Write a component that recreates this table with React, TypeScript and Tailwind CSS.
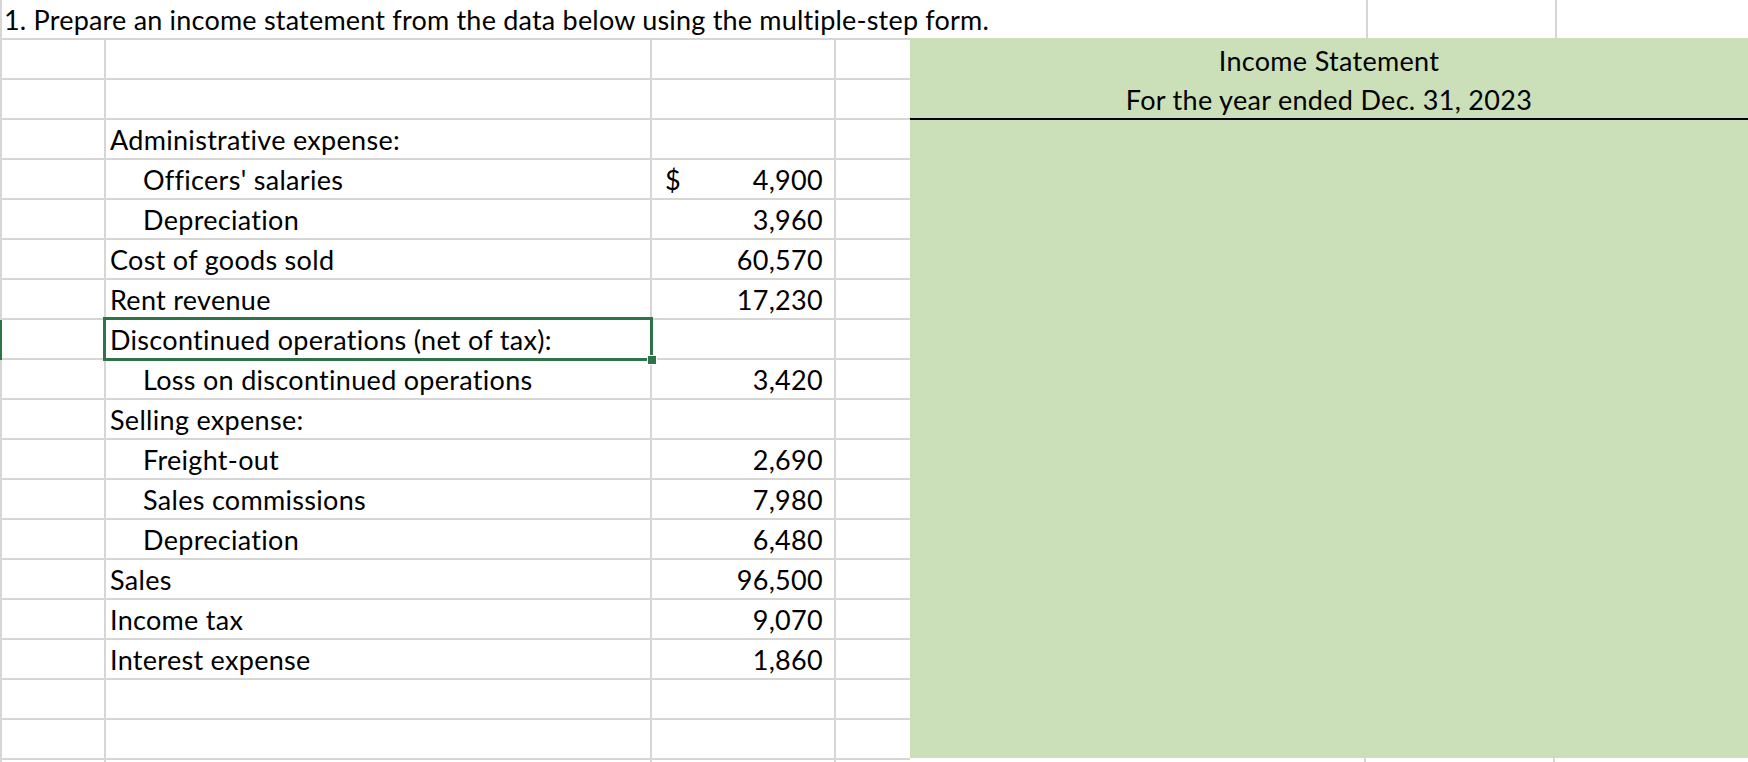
import React from "react";

type Row = { label?: string; indent?: boolean; dollar?: boolean; value?: string; selected?: boolean };

const rows: Row[] = [
  {},
  {},
  { label: "Administrative expense:" },
  { label: "Officers' salaries", indent: true, dollar: true, value: "4,900" },
  { label: "Depreciation", indent: true, value: "3,960" },
  { label: "Cost of goods sold", value: "60,570" },
  { label: "Rent revenue", value: "17,230" },
  { label: "Discontinued operations (net of tax):", selected: true },
  { label: "Loss on discontinued operations", indent: true, value: "3,420" },
  { label: "Selling expense:" },
  { label: "Freight-out", indent: true, value: "2,690" },
  { label: "Sales commissions", indent: true, value: "7,980" },
  { label: "Depreciation", indent: true, value: "6,480" },
  { label: "Sales", value: "96,500" },
  { label: "Income tax", value: "9,070" },
  { label: "Interest expense", value: "1,860" },
  {},
  {},
];

export default function App() {
  return (
    <div
      className="w-[1748px] h-[762px] overflow-hidden bg-white text-black text-[27px] leading-none tracking-[0.3px]"
      style={{ fontFamily: "Lato, 'Open Sans', sans-serif" }}
    >
      {/* Header row */}
      <div className="flex h-[40px] border-b-2 border-[#d6d6d6]">
        <div className="w-[1368px] shrink-0 border-l-2 border-r-2 border-[#d6d6d6] flex items-center pl-[2px] whitespace-nowrap tracking-[0.2px]">
          1. Prepare an income statement from the data below using the multiple-step form.
        </div>
        <div className="w-[189px] shrink-0 border-r-2 border-[#d6d6d6]" />
        <div className="flex-1" />
      </div>

      {/* Body */}
      <div className="flex">
        <div className="w-[910px] shrink-0 flex flex-col">
          {rows.map((r, i) => (
            <div
              key={i}
              className={
                "flex h-[40px] border-l-2 " +
                (r.selected ? "border-l-[#2f7348]" : "border-l-[#d6d6d6]")
              }
            >
              <div className="w-[104px] shrink-0 border-b-2 border-r-2 border-[#d6d6d6]" />
              <div className="relative w-[546px] shrink-0 border-b-2 border-r-2 border-[#d6d6d6] flex items-center whitespace-nowrap">
                <span className={r.indent ? "pl-[37px]" : "pl-[4px]"}>{r.label}</span>
                {r.selected && (
                  <div className="absolute z-10 left-[-3px] right-[-3px] top-[-3px] bottom-[-3px] border-[3px] border-[#2f7348]">
                    <div className="absolute right-[-7px] bottom-[-7px] w-[10px] h-[10px] bg-[#2f7348] border border-white" />
                  </div>
                )}
              </div>
              <div className="w-[184px] shrink-0 border-b-2 border-r-2 border-[#d6d6d6] flex items-center justify-between pl-[13px] pr-[11px]">
                <span>{r.dollar ? "$" : ""}</span>
                <span>{r.value}</span>
              </div>
              <div className="w-[74px] shrink-0 border-b-2 border-[#d6d6d6]" />
            </div>
          ))}
          <div className="flex h-[4px] border-l-2 border-[#d6d6d6]">
            <div className="w-[104px] shrink-0 border-r-2 border-[#d6d6d6]" />
            <div className="w-[546px] shrink-0 border-r-2 border-[#d6d6d6]" />
            <div className="w-[184px] shrink-0 border-r-2 border-[#d6d6d6]" />
            <div className="w-[74px] shrink-0" />
          </div>
        </div>

        <div className="flex-1 flex flex-col -mt-[2px]">
          <div className="bg-[#cbdfb8] h-[720px] flex flex-col">
            <div className="h-[42px] flex items-center justify-center pt-[2px]">Income Statement</div>
            <div className="h-[40px] flex items-center justify-center border-b-2 border-black">
              For the year ended Dec. 31, 2023
            </div>
            <div className="flex-1" />
          </div>
          <div className="flex h-[6px]">
            <div className="w-[456px] shrink-0 border-r-2 border-[#d6d6d6]" />
            <div className="w-[189px] shrink-0 border-r-2 border-[#d6d6d6]" />
          </div>
        </div>
      </div>
    </div>
  );
}
